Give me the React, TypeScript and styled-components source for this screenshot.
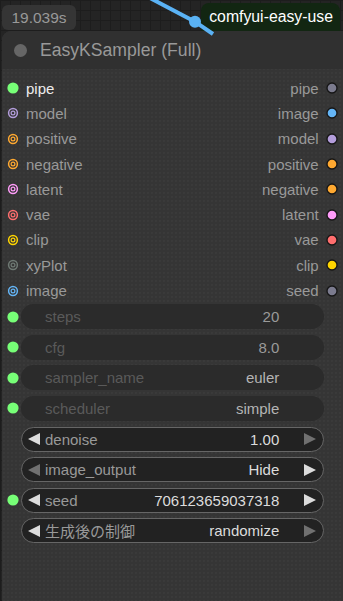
import React from "react";
import styled, { createGlobalStyle } from "styled-components";

const GlobalStyle = createGlobalStyle`
  html, body {
    margin: 0;
    padding: 0;
    width: 343px;
    height: 601px;
    overflow: hidden;
    background: #222;
  }
  body {
    font-family: "Liberation Sans", Arial, "Noto Sans CJK JP", sans-serif;
  }
`;

type Slot = { name: string; color: string; kind: "filled" | "ring" };
type Out = { name: string; color: string };

const inputs: Slot[] = [
  { name: "pipe", color: "#7f7", kind: "filled" },
  { name: "model", color: "#b39ddb", kind: "ring" },
  { name: "positive", color: "#ffa931", kind: "ring" },
  { name: "negative", color: "#ffa931", kind: "ring" },
  { name: "latent", color: "#ff9cf9", kind: "ring" },
  { name: "vae", color: "#ff6e6e", kind: "ring" },
  { name: "clip", color: "#ffd500", kind: "ring" },
  { name: "xyPlot", color: "#6f7a74", kind: "ring" },
  { name: "image", color: "#64b5f6", kind: "ring" },
];

const outputs: Out[] = [
  { name: "pipe", color: "#7b7b8e" },
  { name: "image", color: "#64b5f6" },
  { name: "model", color: "#b39ddb" },
  { name: "positive", color: "#ffa931" },
  { name: "negative", color: "#ffa931" },
  { name: "latent", color: "#ff9cf9" },
  { name: "vae", color: "#ff6e6e" },
  { name: "clip", color: "#ffd500" },
  { name: "seed", color: "#7b7b8e" },
];

type Widget = {
  label: string;
  value: string;
  active: boolean;
  linked: boolean;
  left?: boolean;
  right?: boolean;
  valueColor?: string;
};

const widgets: Widget[] = [
  { label: "steps", value: "20", active: false, linked: true, valueColor: "#9a9a9a" },
  { label: "cfg", value: "8.0", active: false, linked: true, valueColor: "#9a9a9a" },
  { label: "sampler_name", value: "euler", active: false, linked: true, valueColor: "#b4b4b4" },
  { label: "scheduler", value: "simple", active: false, linked: true, valueColor: "#b4b4b4" },
  { label: "denoise", value: "1.00", active: true, linked: false, left: true, right: false },
  { label: "image_output", value: "Hide", active: true, linked: false, left: false, right: true },
  { label: "seed", value: "706123659037318", active: true, linked: true, left: true, right: true },
  { label: "生成後の制御", value: "randomize", active: true, linked: false, left: true, right: false },
];

const InputDot = ({ slot }: { slot: Slot }) => (
  <svg width="12" height="12" viewBox="0 0 12 12">
    {slot.kind === "filled" ? (
      <circle cx="6" cy="6" r="5.6" fill={slot.color} />
    ) : (
      <>
        <circle cx="6" cy="6" r="4.4" fill="none" stroke={slot.color} strokeWidth="1.5" />
        <circle cx="6" cy="6" r="1.9" fill="none" stroke={slot.color} strokeWidth="1.2" />
      </>
    )}
  </svg>
);

const OutputDot = ({ color }: { color: string }) => (
  <svg width="12" height="12" viewBox="0 0 12 12">
    <circle cx="6" cy="6" r="5" fill={color} stroke="#151515" strokeWidth="1.3" />
  </svg>
);

const Arrow = ({ dir, on }: { dir: "l" | "r"; on?: boolean }) => (
  <svg width="12" height="12" viewBox="0 0 12 12">
    <polygon
      points={dir === "l" ? "12,0 12,12 0,6" : "0,0 0,12 12,6"}
      fill={on ? "#dcdcdc" : "#707070"}
    />
  </svg>
);

const App = () => {
  return (
    <>
      <GlobalStyle />
      <Canvas>
        <Link width="343" height="40" viewBox="0 0 343 40">
          <path d="M150 -2 L195 21.7 L213 34" fill="none" stroke="#5ab2f4" strokeWidth="4" />
          <circle cx="195" cy="21.7" r="6" fill="#5ab2f4" />
        </Link>
        <BadgeRow>
          <TimeBadge>19.039s</TimeBadge>
          <PackBadge>comfyui-easy-use</PackBadge>
        </BadgeRow>
        <Node>
          <TitleBar>
            <TitleDot />
            <Title>EasyKSampler (Full)</Title>
          </TitleBar>
          <Slots>
            {inputs.map((slot, i) => (
              <SlotRow key={slot.name + i}>
                <Input $connected={slot.kind === "filled"}>
                  <InputDot slot={slot} />
                  {slot.name}
                </Input>
                <Output>
                  {outputs[i].name}
                  <OutputDot color={outputs[i].color} />
                </Output>
              </SlotRow>
            ))}
          </Slots>
          <Widgets>
            {widgets.map((w) => (
              <WidgetRow key={w.label}>
                <WidgetSlot>
                  {w.linked && <InputDot slot={{ name: "", color: "#7f7", kind: "filled" }} />}
                </WidgetSlot>
                <Pill $active={w.active}>
                  <ArrowBox $show={w.active}>
                    <Arrow dir="l" on={w.left} />
                  </ArrowBox>
                  <PillLabel $active={w.active}>{w.label}</PillLabel>
                  <PillValue style={{ color: w.active ? "#dcdcdc" : w.valueColor }}>{w.value}</PillValue>
                  <ArrowBox $show={w.active}>
                    <Arrow dir="r" on={w.right} />
                  </ArrowBox>
                </Pill>
              </WidgetRow>
            ))}
          </Widgets>
        </Node>
      </Canvas>
    </>
  );
};

export default App;

const Canvas = styled.div`
  position: relative;
  width: 343px;
  height: 601px;
  display: flex;
  flex-direction: column;
  overflow: hidden;
  background-color: #242424;
  background-image: linear-gradient(#1d1d1d 1px, transparent 1px),
    linear-gradient(90deg, #1d1d1d 1px, transparent 1px);
  background-size: 10px 10px;
`;

const Link = styled.svg`
  position: absolute;
  top: 0;
  left: 0;
  z-index: 2;
  pointer-events: none;
`;

const BadgeRow = styled.div`
  height: 31px;
  flex-shrink: 0;
  display: flex;
  justify-content: space-between;
  align-items: flex-start;
  padding: 0 3px 0 2px;
`;

const TimeBadge = styled.div`
  margin-top: 5px;
  width: 74px;
  height: 25px;
  border-radius: 6px;
  background: #353535;
  color: #999;
  font-size: 15.5px;
  display: flex;
  align-items: center;
  justify-content: center;
`;

const PackBadge = styled.div`
  margin-top: 3px;
  height: 28px;
  padding: 0 7px 0 8px;
  border-radius: 8px 8px 0 0;
  background: #122612;
  color: #fff;
  font-size: 15.8px;
  display: flex;
  align-items: center;
`;

const Node = styled.div`
  flex: 1;
  margin-left: 2px;
  background-color: #353535;
  background-image: radial-gradient(#3a3a3a 0.7px, transparent 0.8px);
  background-size: 4px 4px;
  border-radius: 9px 0 0 0;
  display: flex;
  flex-direction: column;
`;

const TitleBar = styled.div`
  height: 38px;
  flex-shrink: 0;
  display: flex;
  align-items: center;
  gap: 13.5px;
  padding-left: 11.5px;
  background: #303030;
  border-radius: 9px 0 0 0;
`;

const TitleDot = styled.div`
  width: 13px;
  height: 13px;
  border-radius: 50%;
  background: #666;
`;

const Title = styled.div`
  color: #999;
  font-size: 17.6px;
`;

const Slots = styled.div`
  padding-top: 6.5px;
  display: flex;
  flex-direction: column;
`;

const SlotRow = styled.div`
  height: 25.3px;
  display: flex;
  align-items: center;
  justify-content: space-between;
  font-size: 15px;
`;

const Input = styled.div<{ $connected: boolean }>`
  display: flex;
  align-items: center;
  gap: 6.7px;
  padding-left: 5.3px;
  color: ${(p) => (p.$connected ? "#ececec" : "#999")};
`;

const Output = styled.div`
  display: flex;
  align-items: center;
  gap: 7.3px;
  padding-right: 5px;
  color: #999;
`;

const Widgets = styled.div`
  margin-top: 1px;
  display: flex;
  flex-direction: column;
  gap: 5.6px;
`;

const WidgetRow = styled.div`
  height: 25px;
  display: flex;
  align-items: center;
`;

const WidgetSlot = styled.div`
  width: 18.7px;
  flex-shrink: 0;
  box-sizing: border-box;
  padding-left: 5.3px;
  display: flex;
  align-items: center;
`;

const Pill = styled.div<{ $active: boolean }>`
  width: 303.3px;
  height: 25px;
  box-sizing: border-box;
  border-radius: 12.5px;
  border: 1px solid ${(p) => (p.$active ? "#666" : "transparent")};
  background: ${(p) => (p.$active ? "#222" : "#2b2b2b")};
  padding: 0 7px 0 6.3px;
  display: flex;
  align-items: center;
  font-size: 15px;
`;

const ArrowBox = styled.div<{ $show: boolean }>`
  width: 12px;
  height: 12px;
  display: flex;
  visibility: ${(p) => (p.$show ? "visible" : "hidden")};
`;

const PillLabel = styled.div<{ $active: boolean }>`
  flex: 1;
  margin-left: 5px;
  color: ${(p) => (p.$active ? "#999" : "#5a5a5a")};
  white-space: nowrap;
`;

const PillValue = styled.div`
  margin-right: 24.7px;
  white-space: nowrap;
`;
